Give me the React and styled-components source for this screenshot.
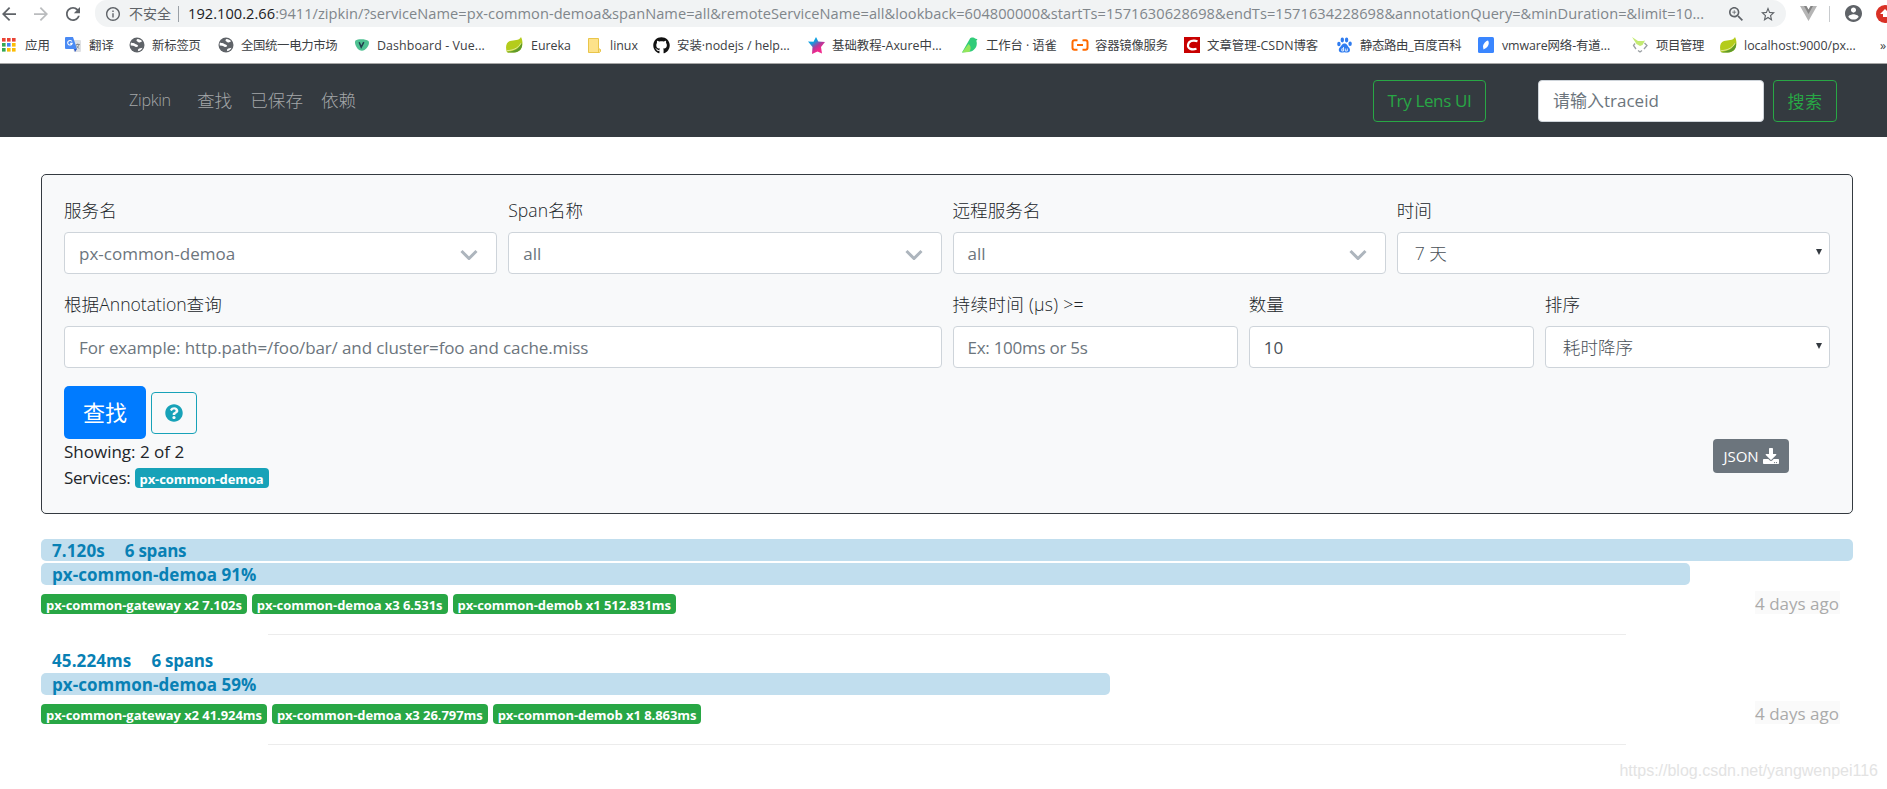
import React from 'react';
import styled, {createGlobalStyle} from 'styled-components';
import {FaDownload, FaGithub, FaQuestionCircle} from 'react-icons/fa';

const GlobalStyle = createGlobalStyle`
  * { box-sizing: border-box; }
  body {
    margin: 0;
    overflow: hidden;
    background: #fff;
    color: #212529;
    font-family: 'Open Sans', 'Noto Sans CJK SC', sans-serif;
    font-size: 17px;
  }
  svg { display: block; flex: none; }
`

// letter-spacing is tuned per string, the face is a bit wider than Segoe UI
const Text = styled.span`
  white-space: nowrap;
  letter-spacing: ${({$ls}) => $ls || 0}px;
`

const StyledBrowser = styled.header`
  height: 64px;
  border-bottom: 1px solid #a6a6a6;
  background: #fff;
`

const StyledToolbar = styled.div`
  display: flex;
  align-items: center;
  height: 27px;
  padding-left: 2px;
  .forward { margin-left: 18px; }
  .reload { margin-left: 18px; }
`

const StyledAddress = styled.div`
  display: flex;
  flex: none;
  align-items: center;
  width: 1691px;
  height: 27px;
  margin-left: 15px;
  padding-left: 11px;
  border-radius: 12px 14px 14px 14px;
  background: #f1f3f4;
  color: #80868b;
  font-size: 14.6px;
  line-height: 24px;
  .unsafe { width: 43px; margin-left: 9px; font-size: 14px; color: #5f6368; }
  .divider { width: 1px; height: 16px; margin: 0 9px 0 6px; background: #9aa0a6; }
  .url { width: 1517px; padding-bottom: 2px; }
  b { font-weight: 400; color: #202124; }
  .zoom { margin-left: 24px; }
  .star { margin-left: 18px; }
`

const StyledExtensions = styled.div`
  display: flex;
  align-items: center;
  margin-left: 14px;
  .divider { width: 1px; height: 16px; margin: 0 15px 0 12px; background: #c8cbce; }
  .alert { margin-left: 14px; }
`

const StyledBookmarks = styled.div`
  display: flex;
  align-items: center;
  height: 36px;
  padding-left: 2px;
  font-size: 12.4px;
  color: #3c4043;
`

const StyledBookmark = styled.div`
  display: flex;
  align-items: center;
  flex: none;
  width: ${({$width}) => $width}px;
  gap: ${({$gap}) => $gap || 8}px;
`

const StyledNavbar = styled.nav`
  display: flex;
  align-items: center;
  height: 73px;
  padding: 0 50px 0 129px;
  background: #343a40;
  color: #a4a7a9;
  font-weight: 300;
  .brand { width: 68px; padding-bottom: 2px; font-size: 16.2px; }
  .links { display: flex; flex: 1; gap: 18px; padding-bottom: 2px; font-size: 17.6px; }
`

const StyledOutline = styled.div`
  display: flex;
  align-items: center;
  justify-content: center;
  width: ${({$width}) => $width}px;
  height: 42px;
  border: 1px solid ${({$color}) => $color};
  border-radius: 4px;
  color: ${({$color}) => $color};
  font-weight: 400;
`

const StyledControl = styled.div`
  display: flex;
  align-items: center;
  justify-content: space-between;
  width: ${({$width}) => $width ? `${$width}px` : '100%'};
  height: 42px;
  padding: ${({$native}) => $native ? '0 7px 2px 17px' : '1px 18px 0 14px'};
  border: 1px solid #ced4da;
  border-radius: 4px;
  background: #fff;
  color: ${({$filled}) => $filled ? '#495057' : '#6c757d'};
  font-size: ${({$native}) => $native ? 17.6 : 17}px;
  font-weight: ${({$native}) => $native ? 300 : 400};
`

const StyledTraceSearch = styled.div`
  display: flex;
  align-items: center;
  gap: 9px;
  margin-left: 52px;
  ${StyledControl} { padding: 0 14px 2px; }
`

const StyledPage = styled.main`
  padding: 37px 34px 0 41px;
`

const StyledCard = styled.section`
  height: 340px;
  padding: 20px 22px 0;
  border: 1px solid #343a40;
  border-radius: 5px;
  background: #f8f9fa;
`

const StyledForm = styled.div`
  display: grid;
  grid-template-columns: repeat(12, 1fr);
  column-gap: 11px;
  row-gap: 15px;
`

const StyledField = styled.div`
  grid-column: span ${({$span}) => $span};
  label { display: block; height: 37px; font-size: 17.6px; font-weight: 300; line-height: 31px; }
`

const StyledActions = styled.div`
  display: flex;
  align-items: center;
  gap: 5px;
  margin-top: 18px;
`

const StyledFind = styled.div`
  width: 82px;
  height: 53px;
  border-radius: 5px;
  background: #007bff;
  color: #fff;
  font-size: 22px;
  line-height: 52px;
  text-align: center;
`

const StyledSummary = styled.div`
  display: flex;
  justify-content: space-between;
  padding-right: 41px;
  line-height: 26px;
`

const StyledJson = styled.div`
  display: flex;
  align-items: center;
  justify-content: center;
  gap: 4px;
  width: 76px;
  height: 34px;
  border-radius: 4px;
  background: #6c757d;
  color: #fff;
  font-size: 15px;
`

const StyledBadge = styled.span`
  display: inline-block;
  height: 20px;
  padding: 0 5px;
  border-radius: 4px;
  background: ${({$color}) => $color};
  color: #fff;
  font-size: 13px;
  font-weight: 700;
  line-height: 22px;
`

const StyledTraces = styled.section`
  padding-top: 25px;
`

const StyledTrace = styled.div`
  height: 110px;
`

const StyledBar = styled.div`
  height: 22px;
  margin-bottom: 2px;
  padding-left: 11px;
  border-radius: 5px;
  background: ${({$empty}) => $empty ? 'transparent' : '#c1deee'};
  color: #0880b4;
  font-weight: 700;
  line-height: 24px;
  .spans { margin-left: 20px; }
`

const StyledTraceFooter = styled.div`
  display: flex;
  justify-content: space-between;
  padding: 7px 13px 0 0;
  .badges { display: flex; gap: 5px; }
  .ago { width: 85px; height: 23px; margin-top: -3px; background: #fafafa; color: #aaa; line-height: 25px; }
`

const StyledRule = styled.hr`
  width: 1358px;
  height: 1px;
  margin: 20px auto 0;
  border: 0;
  background: #ececec;
`

const StyledWatermark = styled.div`
  position: absolute;
  right: 9px;
  bottom: 9px;
  color: #e3e3e3;
  font-family: 'Liberation Sans', sans-serif;
  font-size: 16px;
`

const Glyph = ({d, box, width, height, color = '#5f6368', className}) => (
    <svg className={className} width={width} height={height} viewBox={box} preserveAspectRatio="none">
        <path d={d} fill={color}/>
    </svg>
)

const AppsIcon = () => (
    <svg width="14" height="14" viewBox="0 0 14 14">
        {['#ea4335', '#ea4335', '#ea4335', '#34a853', '#4285f4', '#fbbc05', '#34a853', '#fbbc05', '#fbbc05'].map((fill, i) => (
            <rect key={i} x={(i % 3) * 5} y={Math.floor(i / 3) * 5} width="3.6" height="3.6" fill={fill}/>
        ))}
    </svg>
)

const TranslateIcon = () => (
    <svg width="16" height="16" viewBox="0 0 16 16">
        <path d="M6 3h9a1 1 0 0 1 1 1v10a1 1 0 0 1-1 1H9z" fill="#dfe1e4"/>
        <path d="M1 0h7l4 12H1a1 1 0 0 1-1-1V1a1 1 0 0 1 1-1z" fill="#4a8af4"/>
        <path d="M9 12h3l-2 3z" fill="#2a56c6"/>
        <path d="M7 4.600A2.300 2.300 0 1 0 7.200 6.400H5.200" fill="none" stroke="#fff" strokeWidth="1.100"/>
        <path d="M10.800 7.500h4M12.800 6.500v1M14 7.500c-.5 2-1.500 3-2.500 4M11.500 8.500c.8 1.500 1.500 2.200 2.800 3" fill="none" stroke="#7b8087" strokeWidth=".8"/>
    </svg>
)

const GlobeIcon = () => (
    <svg width="16" height="16" viewBox="0 0 16 16">
        <circle cx="8" cy="8" r="7.500" fill="#5f6368"/>
        <path d="M2 5.500C3.500 6.200 5 6 6 6.800s2.500.8 3 1.700-.6 1.500-1.900 1.400c-1.500-.1-1.700-1.100-3-1.100L1.700 8.500C1.600 7 1.600 6.400 2 5.500zM8.500 2c1.200-.2 3.500.8 4.500 2.200-.8.6-1.600 1.400-2.800 1.200S8.800 4.600 8 4.200 7.400 2.300 8.500 2zM9.500 12c1-.9 2.700-1.100 4-1.300-.8 1.700-2.200 2.900-4.200 3.400-.6-.8-.4-1.500.2-2.100z" fill="#fff"/>
    </svg>
)

const VueAdminIcon = () => (
    <svg width="16" height="16" viewBox="0 0 16 16">
        <path d="M1.500 3.500C4 1.800 12 2 14.500 4c1.500 2-.5 7-4 9-2 1.200-5 .8-6.500-1C2 10 0 5.500 1.500 3.500z" fill="#4fc192"/>
        <path d="M5.200 5.200l2 5 2.600-5" fill="none" stroke="#213c4c" strokeWidth="1.500"/>
    </svg>
)

const LeafIcon = () => (
    <svg width="17" height="16" viewBox="0 0 17 16">
        <path d="M15 0c3 6 1.500 14-5 15.200-3 .6-7 .5-9.200-.3C-.5 11-.5 5.500 4 4 8 2.900 13 4 15 0z" fill="#b4cc1c"/>
        <path d="M.8 14.900C7 14.500 13 12.500 15.800 5.500 16.800 10 15 14 10 15.200c-3 .6-7 .5-9.200-.3z" fill="#5f9a2b"/>
        <path d="M1 13.700c5.500-.4 11-2 14-7.500" fill="none" stroke="#e9f0b5" strokeWidth=".8"/>
    </svg>
)

const NoteIcon = () => (
    <svg width="13" height="15" viewBox="0 0 13 15">
        <path d="M.5.5h10v10l2 1v2l-1 1H.5z" fill="#fde28a" stroke="#e9c54a"/>
        <path d="M10.500 10.500v4" stroke="#e9c54a"/>
    </svg>
)

const StarIcon = () => (
    <svg width="17" height="17" viewBox="0 0 17 17">
        <defs>
            <linearGradient id="axure" x1="0" y1="0" x2=".7" y2="1">
                <stop offset=".35" stopColor="#0f9fe0"/>
                <stop offset=".6" stopColor="#b03a9b"/>
                <stop offset=".8" stopColor="#f0288c"/>
            </linearGradient>
        </defs>
        <path d="M8 0l2.300 4.500 6.700.5-4 5 1 6.500-4.500-2-5.500 2.500.5-7L0 4.500l5.500.2z" fill="url(#axure)"/>
    </svg>
)

const BirdIcon = () => (
    <svg width="16" height="16" viewBox="0 0 16 16">
        <path d="M8 1.500C9 .2 12 .3 13 1.500l2.500.8-1.200 1.500c1.500 4-.3 9-5.300 10.700L0 15.500z" fill="#31cc79"/>
        <path d="M6.500 7C9 9 9.500 12 7 15L0 15.500z" fill="#93e65c"/>
    </svg>
)

const AliyunIcon = () => (
    <svg width="18" height="12" viewBox="0 0 18 12">
        <path d="M6.500 1.200H3.500a2 2 0 0 0-2 2v5.600a2 2 0 0 0 2 2h3M11.500 1.200h3a2 2 0 0 1 2 2v5.600a2 2 0 0 1-2 2h-3M6 6h6" fill="none" stroke="#ff6a00" strokeWidth="2"/>
    </svg>
)

const CsdnIcon = () => (
    <svg width="16" height="16" viewBox="0 0 16 16">
        <rect width="16" height="16" fill="#c80000"/>
        <path d="M13.500 4.200C9 2.600 4.500 4 4 8s4 5 8.500 3.800" fill="none" stroke="#fff" strokeWidth="2.200"/>
    </svg>
)

const PawIcon = () => (
    <svg width="15" height="16" viewBox="0 0 15 16">
        <g fill="#2f7cf0">
            <ellipse cx="1.900" cy="7" rx="1.700" ry="2.200"/>
            <ellipse cx="5.300" cy="3" rx="1.700" ry="2.400"/>
            <ellipse cx="9.600" cy="3" rx="1.700" ry="2.400"/>
            <ellipse cx="13.100" cy="6.800" rx="1.700" ry="2.200"/>
            <path d="M7.500 6.500c2.500 0 3 2.500 4.500 4s1.500 5-1.500 5-2-.3-3-.3-1 .4-3.200.4-3.500-3-1.500-5 2.200-4.100 4.700-4.100z"/>
        </g>
        <path d="M6.500 10v4H4.800v-2.200h1.700M8.300 11.500V14h2v-2.500" fill="none" stroke="#fff" strokeWidth=".8"/>
    </svg>
)

const YoudaoIcon = () => (
    <svg width="16" height="16" viewBox="0 0 16 16">
        <rect width="16" height="16" rx="1.500" fill="#3a86ff"/>
        <path d="M10 3.500c1.500 1.800.8 5.500-2 7.500L5.500 12.500l-.5-3C5.200 7 7.500 4 10 3.500z" fill="#fff"/>
    </svg>
)

const ProjectIcon = () => (
    <svg width="16" height="16" viewBox="0 0 16 16">
        <path d="M0 0l6 4h5l2-.5L10.500 8 8 9 4.500 7z" fill="#c3ea72"/>
        <path d="M3 6.500L1.500 8.500 4 12M12.500 6L15 8.500 12 12M6 13.500l2 1.500 2-1.500" fill="none" stroke="#9a9fa3" strokeWidth="1.300"/>
    </svg>
)

const VueGreyIcon = () => (
    <svg width="17" height="15" viewBox="0 0 17 15">
        <path d="M0 0h5l3.500 6L12 0h5L8.500 15z" fill="#b5b5b5"/>
        <path d="M4 0h2.500l2 3.500 2-3.500H13L8.500 8z" fill="#848484"/>
    </svg>
)

const AlertIcon = () => (
    <svg className="alert" width="18" height="18" viewBox="0 0 18 18">
        <circle cx="9" cy="9" r="9" fill="#d93025"/>
        <path d="M9 4l5 5h-3v3H7V9H4z" fill="#fff"/>
    </svg>
)

const Chevron = () => (
    <svg width="18" height="12" viewBox="0 -2 18 12">
        <path d="M1.500 1L9 8.500 16.500 1" fill="none" stroke="#adb5bd" strokeWidth="3"/>
    </svg>
)

const NativeArrow = () => (
    <svg width="6" height="6" viewBox="0 0 6 6">
        <path d="M0 0h6L3 6z" fill="#343a40"/>
    </svg>
)

const bookmarks = [
    {icon: <AppsIcon/>, text: '应用', width: 63, gap: 9},
    {icon: <TranslateIcon/>, text: '翻译', width: 64},
    {icon: <GlobeIcon/>, text: '新标签页', width: 89, gap: 7, ls: -.2},
    {icon: <GlobeIcon/>, text: '全国统一电力市场', width: 136, gap: 7, ls: -.35},
    {icon: <VueAdminIcon/>, text: 'Dashboard - Vue...', width: 152, gap: 7, ls: .1},
    {icon: <LeafIcon/>, text: 'Eureka', width: 82},
    {icon: <NoteIcon/>, text: 'linux', width: 65, gap: 9},
    {icon: <FaGithub size={17} color="#111"/>, text: '安装·nodejs / help...', width: 155, gap: 7},
    {icon: <StarIcon/>, text: '基础教程-Axure中...', width: 154, gap: 7},
    {icon: <BirdIcon/>, text: '工作台 · 语雀', width: 109, ls: -.1},
    {icon: <AliyunIcon/>, text: '容器镜像服务', width: 113, gap: 6, ls: -.25},
    {icon: <CsdnIcon/>, text: '文章管理-CSDN博客', width: 153, gap: 7},
    {icon: <PawIcon/>, text: '静态路由_百度百科', width: 141, ls: -.35},
    {icon: <YoudaoIcon/>, text: 'vmware网络-有道...', width: 154, ls: -.1},
    {icon: <ProjectIcon/>, text: '项目管理', width: 88, ls: -.35},
    {icon: <LeafIcon/>, text: 'localhost:9000/px...', width: 160, gap: 7},
]

const traces = [
    {
        duration: '7.120s', spans: '6 spans', full: true, service: 'px-common-demoa 91%', percent: 91,
        badges: ['px-common-gateway x2 7.102s', 'px-common-demoa x3 6.531s', 'px-common-demob x1 512.831ms'],
    },
    {
        duration: '45.224ms', spans: '6 spans', full: false, service: 'px-common-demoa 59%', percent: 59,
        badges: ['px-common-gateway x2 41.924ms', 'px-common-demoa x3 26.797ms', 'px-common-demob x1 8.863ms'],
    },
]

const Browser = () => (
    <StyledBrowser>
        <StyledToolbar>
            <Glyph width={14} height={14} box="4 4 16 16" d="M20 11H7.830l5.590-5.590L12 4l-8 8 8 8 1.410-1.410L7.830 13H20v-2z"/>
            <Glyph className="forward" width={14} height={14} box="4 4 16 16" color="#babcbe" d="M12 4l-1.410 1.410L16.170 11H4v2h12.170l-5.580 5.590L12 20l8-8z"/>
            <Glyph className="reload" width={14} height={14} box="4 4 16 16" d="M17.650 6.350C16.200 4.900 14.210 4 12 4c-4.420 0-7.990 3.580-7.990 8s3.570 8 7.990 8c3.730 0 6.840-2.550 7.730-6h-2.080c-.82 2.330-3.040 4-5.650 4-3.310 0-6-2.690-6-6s2.690-6 6-6c1.660 0 3.140.69 4.220 1.780L13 11h7V4l-2.350 2.350z"/>
            <StyledAddress>
                <Glyph width={14} height={14} box="2 2 20 20" d="M11 17h2v-6h-2v6zm1-15C6.480 2 2 6.480 2 12s4.480 10 10 10 10-4.480 10-10S17.520 2 12 2zm0 18c-4.410 0-8-3.590-8-8s3.590-8 8-8 8 3.590 8 8-3.590 8-8 8zM11 9h2V7h-2v2z"/>
                <Text className="unsafe">不安全</Text>
                <div className="divider"/>
                <Text className="url" $ls={.045}><b>192.100.2.66</b>:9411/zipkin/?serviceName=px-common-demoa&amp;spanName=all&amp;remoteServiceName=all&amp;lookback=604800000&amp;startTs=1571630628698&amp;endTs=1571634228698&amp;annotationQuery=&amp;minDuration=&amp;limit=10...</Text>
                <Glyph className="zoom" width={14} height={14} box="3 3 17.500 17.500" d="M15.500 14h-.79l-.28-.27C15.410 12.590 16 11.110 16 9.500 16 5.910 13.090 3 9.500 3S3 5.910 3 9.500 5.910 16 9.500 16c1.610 0 3.090-.59 4.230-1.570l.27.28v.79l5 4.990L20.490 19l-4.990-5zm-6 0C7.010 14 5 11.990 5 9.500S7.010 5 9.500 5 14 7.010 14 9.500 11.990 14 9.500 14zM12 10h-2v2H9v-2H7V9h2V7h1v2h2v1z"/>
                <Glyph className="star" width={14} height={14} box="2 2 20 19" d="M22 9.240l-7.190-.62L12 2 9.190 8.630 2 9.240l5.460 4.730L5.820 21 12 17.270 18.180 21l-1.630-7.030L22 9.240zM12 15.400l-3.760 2.270 1-4.280-3.320-2.880 4.380-.38L12 6.100l1.710 4.040 4.380.38-3.320 2.880 1 4.280L12 15.400z"/>
            </StyledAddress>
            <StyledExtensions>
                <VueGreyIcon/>
                <div className="divider"/>
                <Glyph width={17} height={17} box="2 2 20 20" d="M12 2C6.480 2 2 6.480 2 12s4.480 10 10 10 10-4.480 10-10S17.520 2 12 2zm0 3c1.660 0 3 1.340 3 3s-1.340 3-3 3-3-1.340-3-3 1.340-3 3-3zm0 14.200c-2.500 0-4.710-1.280-6-3.220.03-1.990 4-3.080 6-3.080 1.990 0 5.970 1.090 6 3.080-1.290 1.940-3.500 3.220-6 3.220z"/>
                <AlertIcon/>
            </StyledExtensions>
        </StyledToolbar>
        <StyledBookmarks>
            {bookmarks.map(({icon, text, width, gap, ls}) => (
                <StyledBookmark key={text} $width={width} $gap={gap}>
                    {icon}
                    <Text $ls={ls}>{text}</Text>
                </StyledBookmark>
            ))}
            <Text>»</Text>
        </StyledBookmarks>
    </StyledBrowser>
)

const Navbar = () => (
    <StyledNavbar>
        <Text className="brand" $ls={-.3}>Zipkin</Text>
        <div className="links">
            <Text>查找</Text>
            <Text>已保存</Text>
            <Text>依赖</Text>
        </div>
        <StyledOutline $width={113} $color="#28a745"><Text $ls={-.35}>Try Lens UI</Text></StyledOutline>
        <StyledTraceSearch>
            <StyledControl $width={226}><Text>请输入traceid</Text></StyledControl>
            <StyledOutline $width={64} $color="#28a745"><Text $ls={.5}>搜索</Text></StyledOutline>
        </StyledTraceSearch>
    </StyledNavbar>
)

const Field = ({label, labelLs, value, ls, span, filled, native, chevron}) => (
    <StyledField $span={span}>
        <label><Text $ls={labelLs}>{label}</Text></label>
        <StyledControl $filled={filled} $native={native}>
            <Text $ls={ls}>{value}</Text>
            {chevron && <Chevron/>}
            {native && <NativeArrow/>}
        </StyledControl>
    </StyledField>
)

const Trace = ({trace}) => (
    <StyledTrace>
        <StyledBar $empty={!trace.full}>
            <Text $ls={.1}>{trace.duration}</Text>
            <Text className="spans" $ls={-.25}>{trace.spans}</Text>
        </StyledBar>
        <StyledBar style={{width: `${trace.percent}%`}}>
            <Text $ls={.06}>{trace.service}</Text>
        </StyledBar>
        <StyledTraceFooter>
            <div className="badges">
                {trace.badges.map(badge => (
                    <StyledBadge key={badge} $color="#28a745"><Text $ls={-.06}>{badge}</Text></StyledBadge>
                ))}
            </div>
            <Text className="ago">4 days ago</Text>
        </StyledTraceFooter>
        <StyledRule/>
    </StyledTrace>
)

const App = () => (
    <>
        <GlobalStyle/>
        <Browser/>
        <Navbar/>
        <StyledPage>
            <StyledCard>
                <StyledForm>
                    <Field span={3} label="服务名" value="px-common-demoa" chevron/>
                    <Field span={3} label="Span名称" value="all" chevron/>
                    <Field span={3} label="远程服务名" value="all" chevron/>
                    <Field span={3} label="时间" value="7 天" filled native/>
                    <Field span={6} label="根据Annotation查询" value="For example: http.path=/foo/bar/ and cluster=foo and cache.miss" ls={-.11}/>
                    <Field span={2} label="持续时间 (μs) >=" labelLs={.3} value="Ex: 100ms or 5s" ls={-.27}/>
                    <Field span={2} label="数量" value="10" filled/>
                    <Field span={2} label="排序" value="耗时降序" filled native/>
                </StyledForm>
                <StyledActions>
                    <StyledFind>查找</StyledFind>
                    <StyledOutline $width={46} $color="#17a2b8"><FaQuestionCircle size={18}/></StyledOutline>
                </StyledActions>
                <StyledSummary>
                    <div>
                        <div><Text>Showing: 2 of 2</Text></div>
                        <div><Text $ls={-.27}>Services: </Text><StyledBadge $color="#17a2b8"><Text $ls={-.1}>px-common-demoa</Text></StyledBadge></div>
                    </div>
                    <StyledJson><Text>JSON</Text><FaDownload size={16}/></StyledJson>
                </StyledSummary>
            </StyledCard>
            <StyledTraces>
                {traces.map(trace => <Trace key={trace.duration} trace={trace}/>)}
            </StyledTraces>
        </StyledPage>
        <StyledWatermark><Text>https://blog.csdn.net/yangwenpei116</Text></StyledWatermark>
    </>
)

export default App;
